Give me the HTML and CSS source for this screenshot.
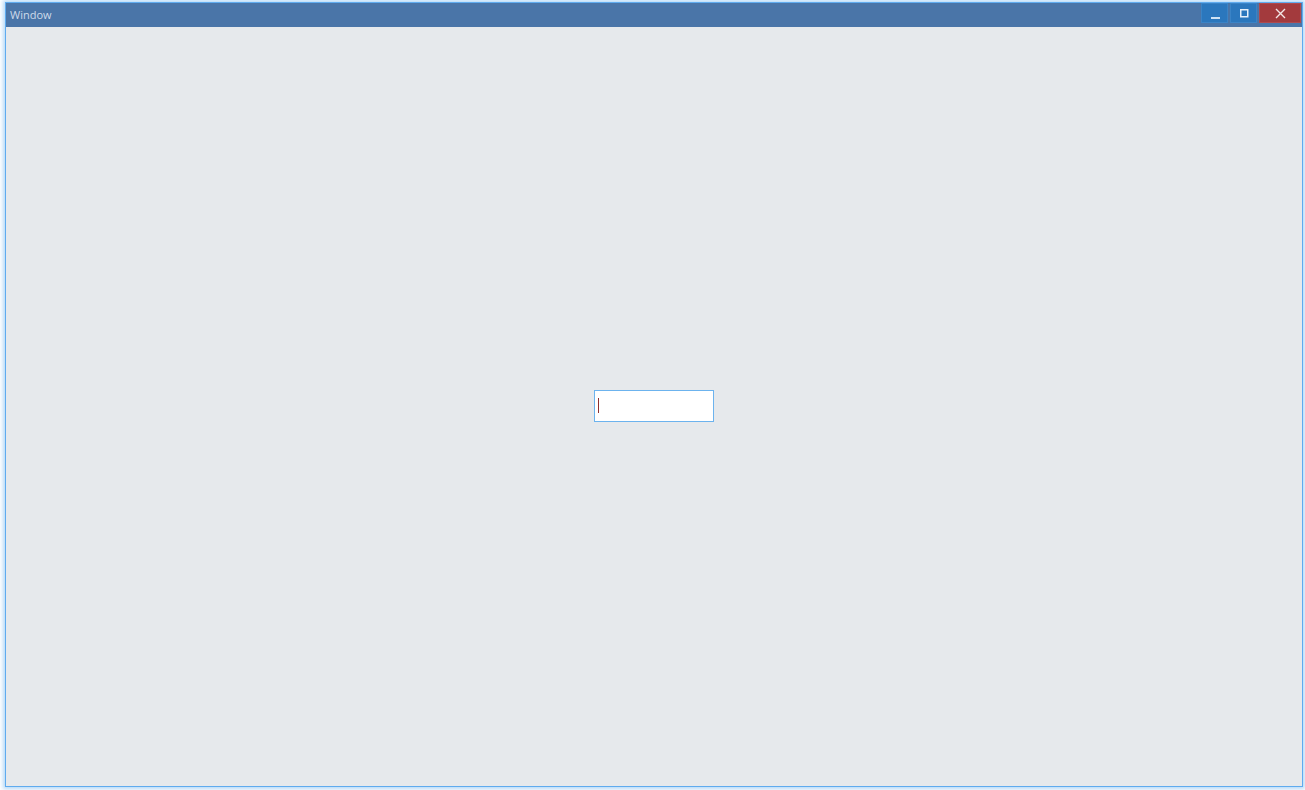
FILE: index.html
```html
<!DOCTYPE html>
<html>
<head>
<meta charset="utf-8">
<title>Window</title>
<link rel="stylesheet" href="styles.css">
</head>
<body>
<div class="window">
  <div class="titlebar">
    <span class="title">Window</span>
    <div class="controls">
      <div class="btn btn-min"><svg width="10" height="10" viewBox="0 0 10 10"><rect x="1" y="7" width="9" height="2" fill="#cfe3f5"/></svg></div>
      <div class="btn btn-max"><svg width="10" height="10" viewBox="0 0 10 10"><rect x="1.75" y="1.75" width="7" height="7" fill="none" stroke="#e6f0fa" stroke-width="1.5"/></svg></div>
      <div class="btn btn-close"><svg width="11" height="11" viewBox="0 0 11 11"><path d="M1 1 L10 10 M10 1 L1 10" stroke="#f3e6e6" stroke-width="1.4"/></svg></div>
    </div>
  </div>
  <div class="content">
    <div class="textbox"><span class="caret"></span></div>
  </div>
</div>
</body>
</html>
```
FILE: styles.css
```css
html, body {
  margin: 0;
  height: 100%;
  background: #ffffff;
}
body {
  padding: 2px 2px 3px 5px;
  box-sizing: border-box;
  font-family: "Open Sans", "Liberation Sans", sans-serif;
}
.window {
  height: 785px;
  box-sizing: border-box;
  border: 1px solid #5fabef;
  box-shadow: 0 0 4px 2px rgba(120, 185, 240, 0.55);
  display: flex;
  flex-direction: column;
  background: #e6e9ec;
}
.titlebar {
  height: 24px;
  flex: none;
  background: #4a75a8;
  display: flex;
  align-items: flex-start;
  justify-content: space-between;
}
.title {
  color: #cfdbea;
  font-size: 11px;
  line-height: 24px;
  padding-left: 4px;
}
.controls {
  display: flex;
  gap: 2px;
  padding-right: 1px;
}
.btn {
  height: 20px;
  box-sizing: border-box;
  display: flex;
  align-items: center;
  justify-content: center;
}
.btn-min, .btn-max {
  width: 27px;
  background: #2b77bd;
  border: 1px solid #3a83c6;
}
.btn-min svg { margin-top: 3px; }
.btn-close {
  width: 42px;
  background: #a33a3d;
  border: 1px solid #ae4a4e;
}
.content {
  flex: 1;
  display: flex;
  align-items: center;
  justify-content: center;
  padding-bottom: 2px;
}
.textbox {
  width: 120px;
  height: 32px;
  box-sizing: border-box;
  background: #ffffff;
  border: 1px solid #6cb3ee;
  display: flex;
  align-items: center;
  padding-left: 3px;
}
.caret {
  width: 1px;
  height: 15px;
  background: #8e2f2f;
}
```
